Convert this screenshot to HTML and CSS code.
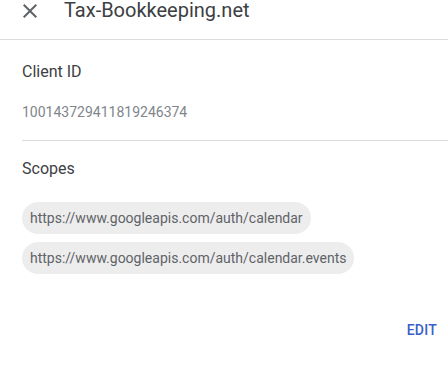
FILE: index.html
```html
<!DOCTYPE html>
<html>
<head>
<meta charset="utf-8">
<link rel="stylesheet" href="styles.css">
</head>
<body>
<div class="dialog">
  <header class="header">
    <svg class="close" width="24" height="24" viewBox="0 0 24 24"><path d="M19 6.41L17.59 5 12 10.59 6.41 5 5 6.41 10.59 12 5 17.59 6.41 19 12 13.41 17.59 19 19 17.59 13.41 12z" fill="#5f6368"/></svg>
    <h1 class="title">Tax-Bookkeeping.net</h1>
  </header>
  <div class="content">
    <section class="section first">
      <h2 class="label">Client ID</h2>
      <div class="value">100143729411819246374</div>
    </section>
    <section class="section second">
      <h2 class="label">Scopes</h2>
      <div class="chips">
        <span class="chip">https://www.googleapis.com/auth/calendar</span>
        <span class="chip">https://www.googleapis.com/auth/calendar.events</span>
      </div>
    </section>
  </div>
  <div class="actions">
    <button class="edit">EDIT</button>
  </div>
</div>
</body>
</html>
```
FILE: styles.css
```css
html, body {
  margin: 0;
  padding: 0;
  background: #ffffff;
}
body {
  font-family: Roboto, "Liberation Sans", Arial, sans-serif;
  color: #3c4043;
}
.dialog {
  width: 448px;
}
.header {
  display: flex;
  align-items: flex-start;
  height: 39px;
  border-bottom: 1px solid #dadce0;
}
.close {
  display: block;
  margin: -1px 0 0 18px;
}
.title {
  margin: 0 0 0 22px;
  font-size: 20px;
  line-height: 20px;
  font-weight: 400;
  color: #3c4043;
}
.content {
  padding-left: 22px;
}
.section.first {
  padding-top: 20px;
  padding-bottom: 18px;
  border-bottom: 1px solid #dadce0;
}
.section.second {
  padding-top: 16px;
}
.label {
  margin: 0;
  font-size: 16px;
  line-height: 24px;
  font-weight: 400;
  color: #3c4043;
}
.value {
  margin-top: 18px;
  font-size: 14px;
  line-height: 20px;
  color: #80868b;
}
.chips {
  margin-top: 21px;
  display: flex;
  flex-direction: column;
  align-items: flex-start;
  gap: 8px;
}
.chip {
  display: inline-flex;
  align-items: center;
  height: 32px;
  padding: 0 8px;
  border-radius: 16px;
  background: #ededed;
  font-size: 14px;
  color: #5f6368;
}
.actions {
  display: flex;
  justify-content: flex-end;
  padding: 38px 3px 0 0;
}
.edit {
  border: none;
  background: none;
  padding: 0 8px;
  height: 36px;
  font-family: Roboto, "Liberation Sans", Arial, sans-serif;
  font-size: 14px;
  font-weight: 500;
  letter-spacing: 0.25px;
  color: #3b5fc8;
}
```
